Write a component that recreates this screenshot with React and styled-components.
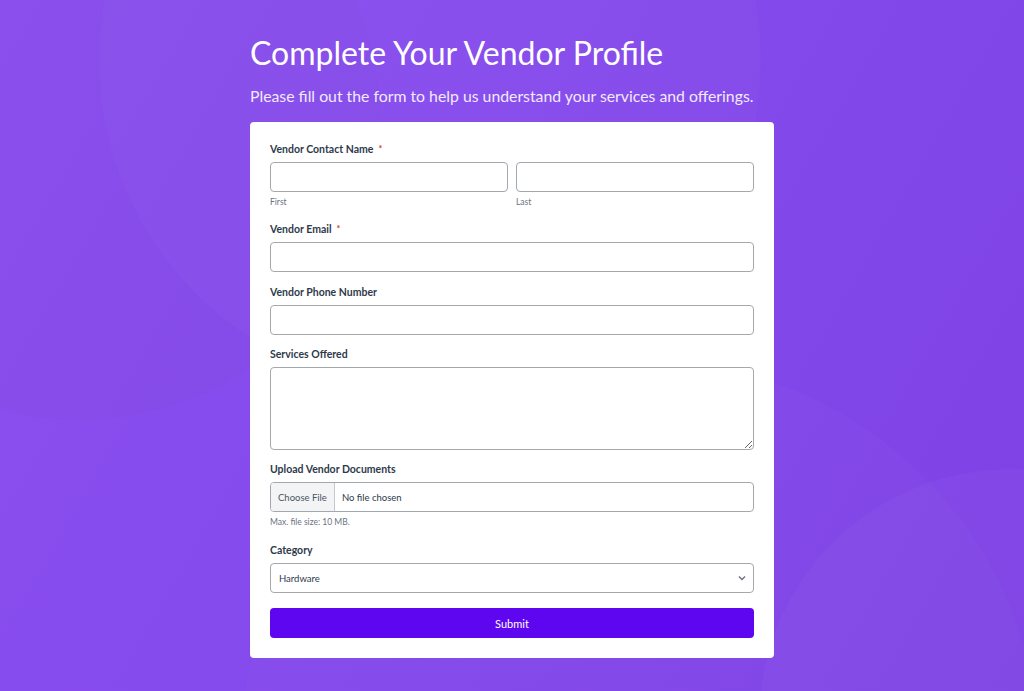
import React from 'react';
import styled, { createGlobalStyle } from 'styled-components';

const GlobalStyle = createGlobalStyle`
  * {
    box-sizing: border-box;
  }
  html, body {
    margin: 0;
    padding: 0;
  }
  body {
    font-family: Lato, 'Open Sans', 'Liberation Sans', sans-serif;
    background: #874bec;
  }
`;

const Page = styled.div`
  min-height: 100vh;
  display: flex;
  justify-content: center;
  background:
    radial-gradient(circle at 1010px 720px, rgba(255, 255, 255, 0.025) 0 250px, transparent 251px),
    radial-gradient(circle at 640px 760px, rgba(255, 255, 255, 0.015) 0 400px, transparent 401px),
    radial-gradient(circle at 430px 60px, rgba(255, 255, 255, 0.018) 0 330px, transparent 331px),
    radial-gradient(circle at 80px 120px, rgba(0, 0, 0, 0.015) 0 300px, transparent 301px),
    linear-gradient(120deg, #8c50f0 0%, #8449eb 55%, #7e42e4 100%);
`;

const Column = styled.main`
  width: 524px;
  padding-top: 34px;
`;

const Title = styled.h1`
  margin: 0;
  font-size: 32px;
  line-height: 1.2;
  font-weight: 400;
  color: #ffffff;
`;

const Subtitle = styled.p`
  margin: 14px 0 16px;
  font-size: 15.8px;
  line-height: 20px;
  white-space: nowrap;
  color: #f1eaff;
`;

const Card = styled.form`
  background: #ffffff;
  border-radius: 4px;
  padding: 20px;
`;

const Field = styled.div`
  margin-bottom: ${(p) => p.$gap ?? 13}px;
`;

const Label = styled.label`
  display: block;
  font-size: 10.5px;
  line-height: 14px;
  font-weight: 700;
  color: #2e3a4b;
  margin-bottom: 6px;
`;

const Required = styled.span`
  color: #d63637;
  margin-left: 5px;
  font-size: 9px;
  vertical-align: 1px;
`;

const NameRow = styled.div`
  display: grid;
  grid-template-columns: 1fr 1fr;
  gap: 8px;
`;

const Input = styled.input`
  display: block;
  width: 100%;
  height: 30px;
  border: 1px solid #a3a7ae;
  border-radius: 4px;
  padding: 0 8px;
  font-family: inherit;
  font-size: 10px;
  color: #2e3a4b;
  background: #fff;
  outline: none;
`;

const TextArea = styled.textarea`
  display: block;
  width: 100%;
  height: 83px;
  border: 1px solid #a3a7ae;
  border-radius: 4px;
  padding: 8px;
  font-family: inherit;
  font-size: 10px;
  resize: vertical;
  outline: none;
`;

const SubLabel = styled.div`
  margin-top: 4px;
  font-size: 8.5px;
  line-height: 12px;
  color: #6b7280;
`;

const FileBox = styled.div`
  display: flex;
  align-items: stretch;
  height: 30px;
  border: 1px solid #a3a7ae;
  border-radius: 4px;
  overflow: hidden;
  font-size: 9.5px;
  color: #2e3a4b;
`;

const FileButton = styled.span`
  display: flex;
  align-items: center;
  padding: 0 7px;
  background: #f3f4f5;
  border-right: 1px solid #c4c7cc;
  color: #4b5563;
`;

const FileName = styled.span`
  display: flex;
  align-items: center;
  padding: 0 7px;
`;

const SelectWrap = styled.div`
  position: relative;
`;

const Select = styled.select`
  display: block;
  width: 100%;
  height: 30px;
  appearance: none;
  border: 1px solid #a3a7ae;
  border-radius: 4px;
  padding: 0 8px;
  font-family: inherit;
  font-size: 9.5px;
  color: #2e3a4b;
  background: #fff;
  outline: none;
`;

const Chevron = styled.svg`
  position: absolute;
  right: 8px;
  top: 12px;
  pointer-events: none;
`;

const Submit = styled.button`
  display: block;
  width: 100%;
  height: 30px;
  margin-top: 15px;
  border: none;
  border-radius: 4px;
  background: #5d06ef;
  color: #ffffff;
  font-family: inherit;
  font-size: 11px;
  font-weight: 400;
  cursor: pointer;
`;

const App = () => (
  <>
    <GlobalStyle />
    <Page>
      <Column>
        <Title>Complete Your Vendor Profile</Title>
        <Subtitle>Please fill out the form to help us understand your services and offerings.</Subtitle>

        <Card onSubmit={(e) => e.preventDefault()}>
          <Field $gap={14}>
            <Label>
              Vendor Contact Name<Required>*</Required>
            </Label>
            <NameRow>
              <div>
                <Input type="text" />
                <SubLabel>First</SubLabel>
              </div>
              <div>
                <Input type="text" />
                <SubLabel>Last</SubLabel>
              </div>
            </NameRow>
          </Field>

          <Field>
            <Label>
              Vendor Email<Required>*</Required>
            </Label>
            <Input type="email" />
          </Field>

          <Field $gap={12}>
            <Label>Vendor Phone Number</Label>
            <Input type="tel" />
          </Field>

          <Field $gap={12}>
            <Label>Services Offered</Label>
            <TextArea />
          </Field>

          <Field $gap={15}>
            <Label>Upload Vendor Documents</Label>
            <FileBox>
              <FileButton>Choose File</FileButton>
              <FileName>No file chosen</FileName>
            </FileBox>
            <SubLabel>Max. file size: 10 MB.</SubLabel>
          </Field>

          <Field $gap={0}>
            <Label>Category</Label>
            <SelectWrap>
              <Select defaultValue="Hardware">
                <option>Hardware</option>
                <option>Software</option>
                <option>Services</option>
              </Select>
              <Chevron width="8" height="6" viewBox="0 0 8 6">
                <path d="M1 1.5 L4 4.5 L7 1.5" fill="none" stroke="#6b7280" strokeWidth="1.4" />
              </Chevron>
            </SelectWrap>
          </Field>

          <Submit type="submit">Submit</Submit>
        </Card>
      </Column>
    </Page>
  </>
);

export default App;
